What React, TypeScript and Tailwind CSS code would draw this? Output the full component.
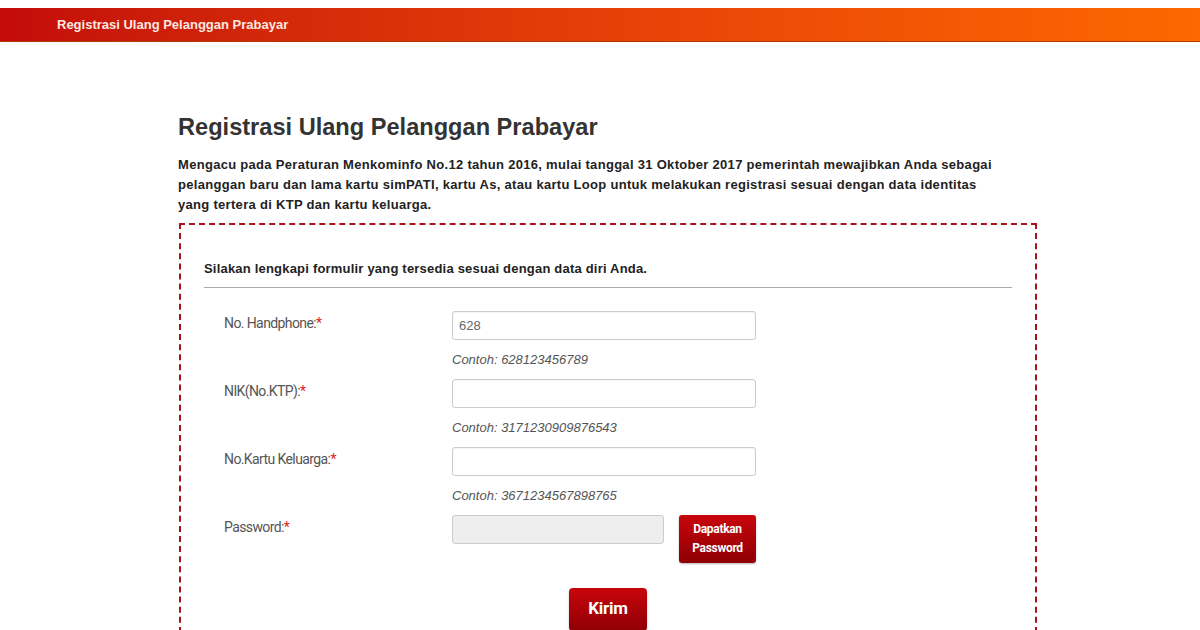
import React from "react";

const narrow = { fontFamily: '"Roboto", "Liberation Sans", sans-serif' };

function Field({ label, value, hint }: { label: string; value?: string; hint?: string }) {
  return (
    <div className="flex flex-row">
      <div className="w-[248px] pl-[20px] pt-[2px] text-[14px] text-[#555] tracking-[-0.6px]" style={narrow}>
        {label}
        <span className="text-[#d22]">*</span>
      </div>
      <div className="flex flex-col">
        <input
          defaultValue={value}
          className="w-[304px] h-[29px] border border-[#ccc] rounded-[3px] px-[6px] text-[13px] text-[#666] bg-white shadow-[inset_0_1px_1px_rgba(0,0,0,0.05)]"
        />
        <p className="h-[39px] pt-[10px] text-[13px] italic text-[#555]">{hint}</p>
      </div>
    </div>
  );
}

export default function App() {
  return (
    <div className="w-[1200px] h-[630px] bg-white overflow-hidden font-['Liberation_Sans',Arial,sans-serif]">
      <div className="pt-[8px]">
        <div className="h-[34px] flex items-center pl-[57px] bg-gradient-to-r from-[#c30a0a] via-[#e63f08] to-[#fd6800] border-b border-[#b23a00]">
          <span className="text-[13px] font-bold text-[#fde8e0]">Registrasi Ulang Pelanggan Prabayar</span>
        </div>
      </div>

      <div className="pl-[178px] pt-[71px] w-[1060px]">
        <h1 className="text-[23.6px] font-bold text-[#333] leading-[28px]">Registrasi Ulang Pelanggan Prabayar</h1>
        <p className="mt-[14px] w-[870px] text-[13px] font-bold text-[#222] leading-[20px] tracking-[0.3px]">
          Mengacu pada Peraturan Menkominfo No.12 tahun 2016, mulai tanggal 31 Oktober 2017 pemerintah mewajibkan Anda sebagai
          <br />
          pelanggan baru dan lama kartu simPATI, kartu As, atau kartu Loop untuk melakukan registrasi sesuai dengan data identitas
          <br />
          yang tertera di KTP dan kartu keluarga.
        </p>

        <div className="mt-[8px] ml-[1px] w-[858px] h-[420px] border-2 border-dashed border-[#a8121a] px-[23px] pt-[34px]">
          <p className="text-[13px] font-bold text-[#222] tracking-[0.2px]">
            Silakan lengkapi formulir yang tersedia sesuai dengan data diri Anda.
          </p>
          <div className="mt-[8px] w-[808px] border-t border-[#aaa]" />

          <div className="mt-[23px] flex flex-col">
            <Field label="No. Handphone:" value="628" hint="Contoh: 628123456789" />
            <Field label="NIK(No.KTP):" hint="Contoh: 3171230909876543" />
            <Field label="No.Kartu Keluarga:" hint="Contoh: 3671234567898765" />
            <div className="flex flex-row">
              <div className="w-[248px] pl-[20px] pt-[2px] text-[14px] text-[#555] tracking-[-0.6px]" style={narrow}>
                Password:<span className="text-[#d22]">*</span>
              </div>
              <input
                disabled
                className="w-[212px] h-[29px] border border-[#ccc] rounded-[3px] bg-[#eee]"
              />
              <button
                className="ml-[15px] w-[77px] h-[48px] rounded-[3px] bg-gradient-to-b from-[#c8060c] to-[#8e0005] text-white text-[12px] font-bold leading-[19px] tracking-[-0.3px] shadow-[0_1px_2px_rgba(0,0,0,0.3)]"
                style={narrow}
              >
                Dapatkan
                <br />
                Password
              </button>
            </div>
            <div className="flex flex-row mt-[25px]">
              <button
                className="ml-[365px] w-[78px] h-[43px] rounded-[4px] bg-gradient-to-b from-[#c8060c] to-[#8e0005] text-white text-[17px] font-bold tracking-[-0.3px] shadow-[0_1px_2px_rgba(0,0,0,0.3)]"
                style={narrow}
              >
                Kirim
              </button>
            </div>
          </div>
        </div>
      </div>
    </div>
  );
}
